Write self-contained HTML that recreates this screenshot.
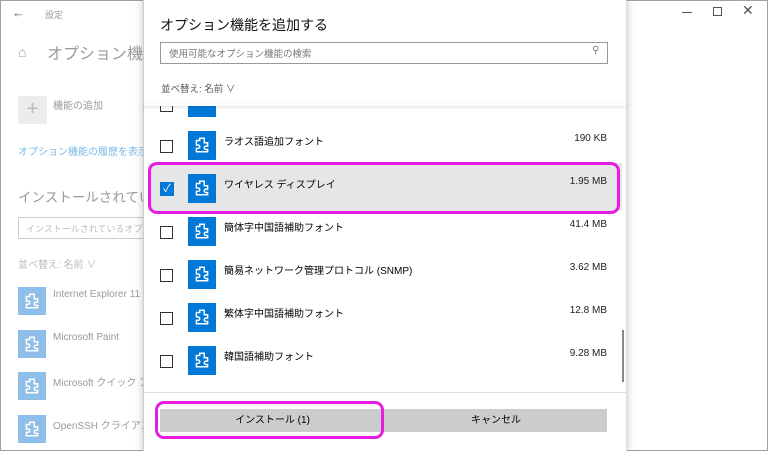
<!DOCTYPE html>
<html><head><meta charset="utf-8"><style>
*{margin:0;padding:0;box-sizing:border-box}
body{width:768px;height:451px;overflow:hidden;background:#fff;font-family:"Liberation Sans","Noto Sans CJK JP",sans-serif;position:relative;color:#000}
.a{position:absolute;white-space:nowrap}
.g{color:#9a9a9a}
.pz{position:absolute;width:28px;height:29px;background:#0078d7}
.pz svg{position:absolute;left:5px;top:5px}
.lpz{position:absolute;width:28px;height:28px;background:#8fbfe8}
.lpz svg{position:absolute;left:5px;top:5px}
.cb{position:absolute;width:13px;height:13px;border:1.5px solid #333;background:#fff}
</style></head><body>
<div class="a" style="left:0;top:0;width:768px;height:451px;border:1px solid #a0a0a0"></div>
<!-- left bg -->
<div class="a g" style="left:12px;top:5px;font-size:13px;color:#666">←</div>
<div class="a g" style="left:45px;top:8px;font-size:9px">設定</div>
<div class="a g" style="left:18px;top:44px;font-size:14px">⌂</div>
<div class="a g" style="left:47px;top:40px;font-size:16px">オプション機</div>
<div class="a" style="left:18px;top:96px;width:29px;height:28px;background:#ececec;color:#bbb;font-size:20px;text-align:center;line-height:26px">+</div>
<div class="a g" style="left:53px;top:97px;font-size:10px">機能の追加</div>
<div class="a" style="left:18px;top:143px;font-size:10px;color:#7ab8e6">オプション機能の履歴を表示</div>
<div class="a g" style="left:18px;top:186px;font-size:13.5px">インストールされている機</div>
<div class="a" style="left:18px;top:217px;width:130px;height:22px;border:1px solid #ccc"></div>
<div class="a" style="left:26px;top:222px;font-size:9px;color:#bbb">インストールされているオプション</div>
<div class="a" style="left:18px;top:256px;font-size:10px;color:#bbb">並べ替え: 名前 ∨</div>
<div id="left"></div>
<!-- right window controls -->
<div class="a" style="left:682px;top:12px;width:10px;border-top:1px solid #555"></div>
<div class="a" style="left:713px;top:7px;width:9px;height:9px;border:1px solid #555"></div>
<div class="a" style="left:742px;top:2px;font-size:14px;color:#555">✕</div>
<!-- dialog -->
<div class="a" style="left:143px;top:0;width:484px;height:451px;background:#fff;box-shadow:0 0 8px rgba(0,0,0,.25);border-left:1px solid #ccc;border-right:1px solid #ddd"></div>
<div class="a" style="left:160px;top:15px;font-size:14px;color:#111">オプション機能を追加する</div>
<div class="a" style="left:160px;top:42px;width:448px;height:22px;border:1.5px solid #999"></div>
<div class="a" style="left:169px;top:46px;font-size:9.5px;color:#777">使用可能なオプション機能の検索</div>
<div class="a" style="left:592px;top:45px;font-size:10px;color:#777">⚲</div>
<div class="a" style="left:161px;top:81px;font-size:9.5px;color:#555">並べ替え: 名前 ∨</div>
<div class="a" style="left:144px;top:104px;width:482px;height:288px;overflow:hidden">
 <div class="a" style="left:4px;top:59px;width:474px;height:48px;background:#e6e6e6"></div>
 <div class="cb" style="left:16px;top:-5px"></div>
 <div class="pz" style="left:44px;top:-16px"></div>
</div>
<div class="a" style="left:144px;top:103px;width:482px;height:3px;box-shadow:0 1px 3px rgba(0,0,0,.15);background:#fff"></div>
<div id="rows"></div>
<div class="a" style="left:622px;top:330px;width:2px;height:52px;background:#888"></div>
<div class="a" style="left:144px;top:392px;width:482px;border-top:1px solid #ddd"></div>
<div class="a" style="left:160px;top:409px;width:225px;height:23px;background:#ccc;font-size:10px;text-align:center;line-height:23px">インストール (1)</div>
<div class="a" style="left:385px;top:409px;width:222px;height:23px;background:#ccc;font-size:10px;text-align:center;line-height:23px">キャンセル</div>
<div class="a" style="left:148px;top:162px;width:472px;height:52px;border:3px solid #e81ce0;border-radius:9px"></div>
<div class="a" style="left:155px;top:401px;width:229px;height:38px;border:3px solid #e81ce0;border-radius:9px"></div>
<script>
const P='<svg width="18" height="18" viewBox="0 0 16 16"><path d="M6 2h4v2.5a1.5 1.5 0 1 1 0 0V6h3v3h-1.5a1.5 1.5 0 1 0 0 3H13v2H3v-3h1.5a1.5 1.5 0 1 0 0-3H3V4h3z" fill="none" stroke="#fff" stroke-width="1.3"/></svg>';
const R=[[131,"ラオス語追加フォント","190 KB",0],[174,"ワイヤレス ディスプレイ","1.95 MB",1],[217,"簡体字中国語補助フォント","41.4 MB",0],[260,"簡易ネットワーク管理プロトコル (SNMP)","3.62 MB",0],[303,"繁体字中国語補助フォント","12.8 MB",0],[346,"韓国語補助フォント","9.28 MB",0]];
let h='';for(const[y,t,s,c]of R){
h+=c?`<div class="a" style="left:160px;top:${y+8}px;width:14px;height:14px;background:#0078d7;color:#fff;font-size:11px;line-height:14px;text-align:center">✓</div>`:`<div class="cb" style="left:160px;top:${y+9}px"></div>`;
h+=`<div class="pz" style="left:188px;top:${y}px">${P}</div><div class="a" style="left:224px;top:${y+2}px;font-size:10px">${t}</div><div class="a" style="left:540px;width:67px;text-align:right;top:${y+2}px;font-size:10px;color:#222">${s}</div>`;}
document.getElementById('rows').innerHTML=h;
const L=[[287,"Internet Explorer 11"],[330,"Microsoft Paint"],[372,"Microsoft クイック アシ"],[415,"OpenSSH クライアント"]];
let l='';for(const[y,t]of L){l+=`<div class="lpz" style="left:18px;top:${y}px">${P}</div><div class="a g" style="left:53px;top:${y+2}px;font-size:10px">${t}</div>`;}
document.getElementById('left').innerHTML=l;
</script>
</body></html>
